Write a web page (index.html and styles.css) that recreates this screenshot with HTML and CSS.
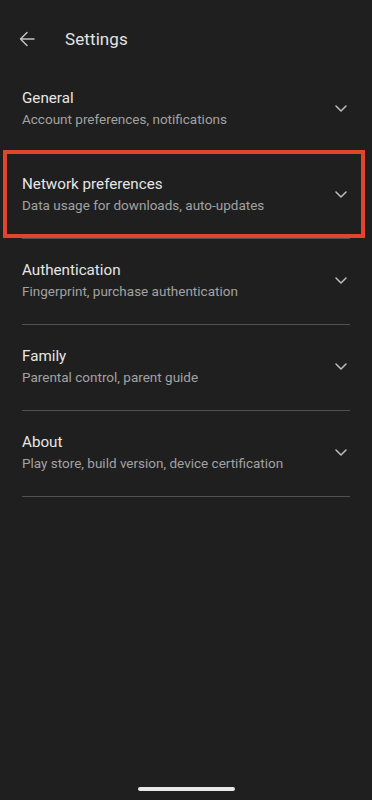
FILE: index.html
```html
<!DOCTYPE html>
<html lang="en">
<head>
<meta charset="utf-8">
<meta name="viewport" content="width=device-width, initial-scale=1">
<title>Settings</title>
<link rel="stylesheet" href="styles.css">
</head>
<body>
<div class="page">
  <header class="topbar">
    <span class="back">
      <svg width="16" height="16" viewBox="0 0 16 16" fill="none" stroke="#c2c2c2" stroke-width="1.5" stroke-linecap="round" stroke-linejoin="round">
        <path d="M15 8H1.5M8 1.5L1.5 8L8 14.5"/>
      </svg>
    </span>
    <h1 class="title">Settings</h1>
  </header>
  <main class="list">
    <div class="row">
      <div class="row-inner">
        <div class="texts">
          <div class="row-title">General</div>
          <div class="row-sub">Account preferences, notifications</div>
        </div>
        <svg class="chev" width="12" height="7" viewBox="0 0 12 7" fill="none" stroke="#bdbdbd" stroke-width="1.5" stroke-linecap="round" stroke-linejoin="round"><path d="M1 1l5 5 5-5"/></svg>
      </div>
    </div>
    <div class="row highlight">
      <div class="row-inner">
        <div class="texts">
          <div class="row-title">Network preferences</div>
          <div class="row-sub">Data usage for downloads, auto-updates</div>
        </div>
        <svg class="chev" width="12" height="7" viewBox="0 0 12 7" fill="none" stroke="#bdbdbd" stroke-width="1.5" stroke-linecap="round" stroke-linejoin="round"><path d="M1 1l5 5 5-5"/></svg>
      </div>
    </div>
    <div class="row">
      <div class="row-inner">
        <div class="texts">
          <div class="row-title">Authentication</div>
          <div class="row-sub">Fingerprint, purchase authentication</div>
        </div>
        <svg class="chev" width="12" height="7" viewBox="0 0 12 7" fill="none" stroke="#bdbdbd" stroke-width="1.5" stroke-linecap="round" stroke-linejoin="round"><path d="M1 1l5 5 5-5"/></svg>
      </div>
    </div>
    <div class="row">
      <div class="row-inner">
        <div class="texts">
          <div class="row-title">Family</div>
          <div class="row-sub">Parental control, parent guide</div>
        </div>
        <svg class="chev" width="12" height="7" viewBox="0 0 12 7" fill="none" stroke="#bdbdbd" stroke-width="1.5" stroke-linecap="round" stroke-linejoin="round"><path d="M1 1l5 5 5-5"/></svg>
      </div>
    </div>
    <div class="row">
      <div class="row-inner">
        <div class="texts">
          <div class="row-title">About</div>
          <div class="row-sub">Play store, build version, device certification</div>
        </div>
        <svg class="chev" width="12" height="7" viewBox="0 0 12 7" fill="none" stroke="#bdbdbd" stroke-width="1.5" stroke-linecap="round" stroke-linejoin="round"><path d="M1 1l5 5 5-5"/></svg>
      </div>
    </div>
  </main>
  <div class="homebar"><span class="handle"></span></div>
</div>
</body>
</html>
```
FILE: styles.css
```css
* { box-sizing: border-box; }
html, body {
  margin: 0;
  padding: 0;
  background: #1f1f1f;
}
body {
  font-family: Roboto, "Noto Sans", Arial, sans-serif;
  color: #e6e6e6;
}
.page {
  width: 372px;
  height: 800px;
  display: flex;
  flex-direction: column;
  overflow: hidden;
}
.topbar {
  height: 67px;
  padding: 11px 0 0 19px;
  display: flex;
  align-items: center;
}
.back {
  width: 16px;
  height: 16px;
  display: flex;
}
.title {
  margin: 0 0 0 30px;
  font-size: 17px;
  font-weight: 400;
  color: #e3e3e3;
  letter-spacing: 0.1px;
}
.list {
  display: flex;
  flex-direction: column;
}
.row {
  position: relative;
  padding: 0 22px;
}
.row-inner {
  height: 86px;
  border-bottom: 1px solid #505050;
  display: flex;
  align-items: center;
  justify-content: space-between;
}
.texts {
  display: flex;
  flex-direction: column;
  margin-top: -3px;
}
.row-title {
  font-size: 15.2px;
  line-height: 22px;
  color: #e6e6e6;
}
.row-sub {
  font-size: 13.5px;
  line-height: 21px;
  color: #a2a2a2;
}
.chev {
  margin-right: 3px;
  margin-top: -2px;
}
.highlight::after {
  content: "";
  position: absolute;
  left: 3px;
  right: 7px;
  top: -3px;
  bottom: 1px;
  border: 4px solid #e2452f;
  pointer-events: none;
}
.homebar {
  margin-top: auto;
  height: 13px;
  display: flex;
  justify-content: center;
}
.handle {
  width: 97px;
  height: 4px;
  border-radius: 2px;
  background: #e8e8e8;
}
```
